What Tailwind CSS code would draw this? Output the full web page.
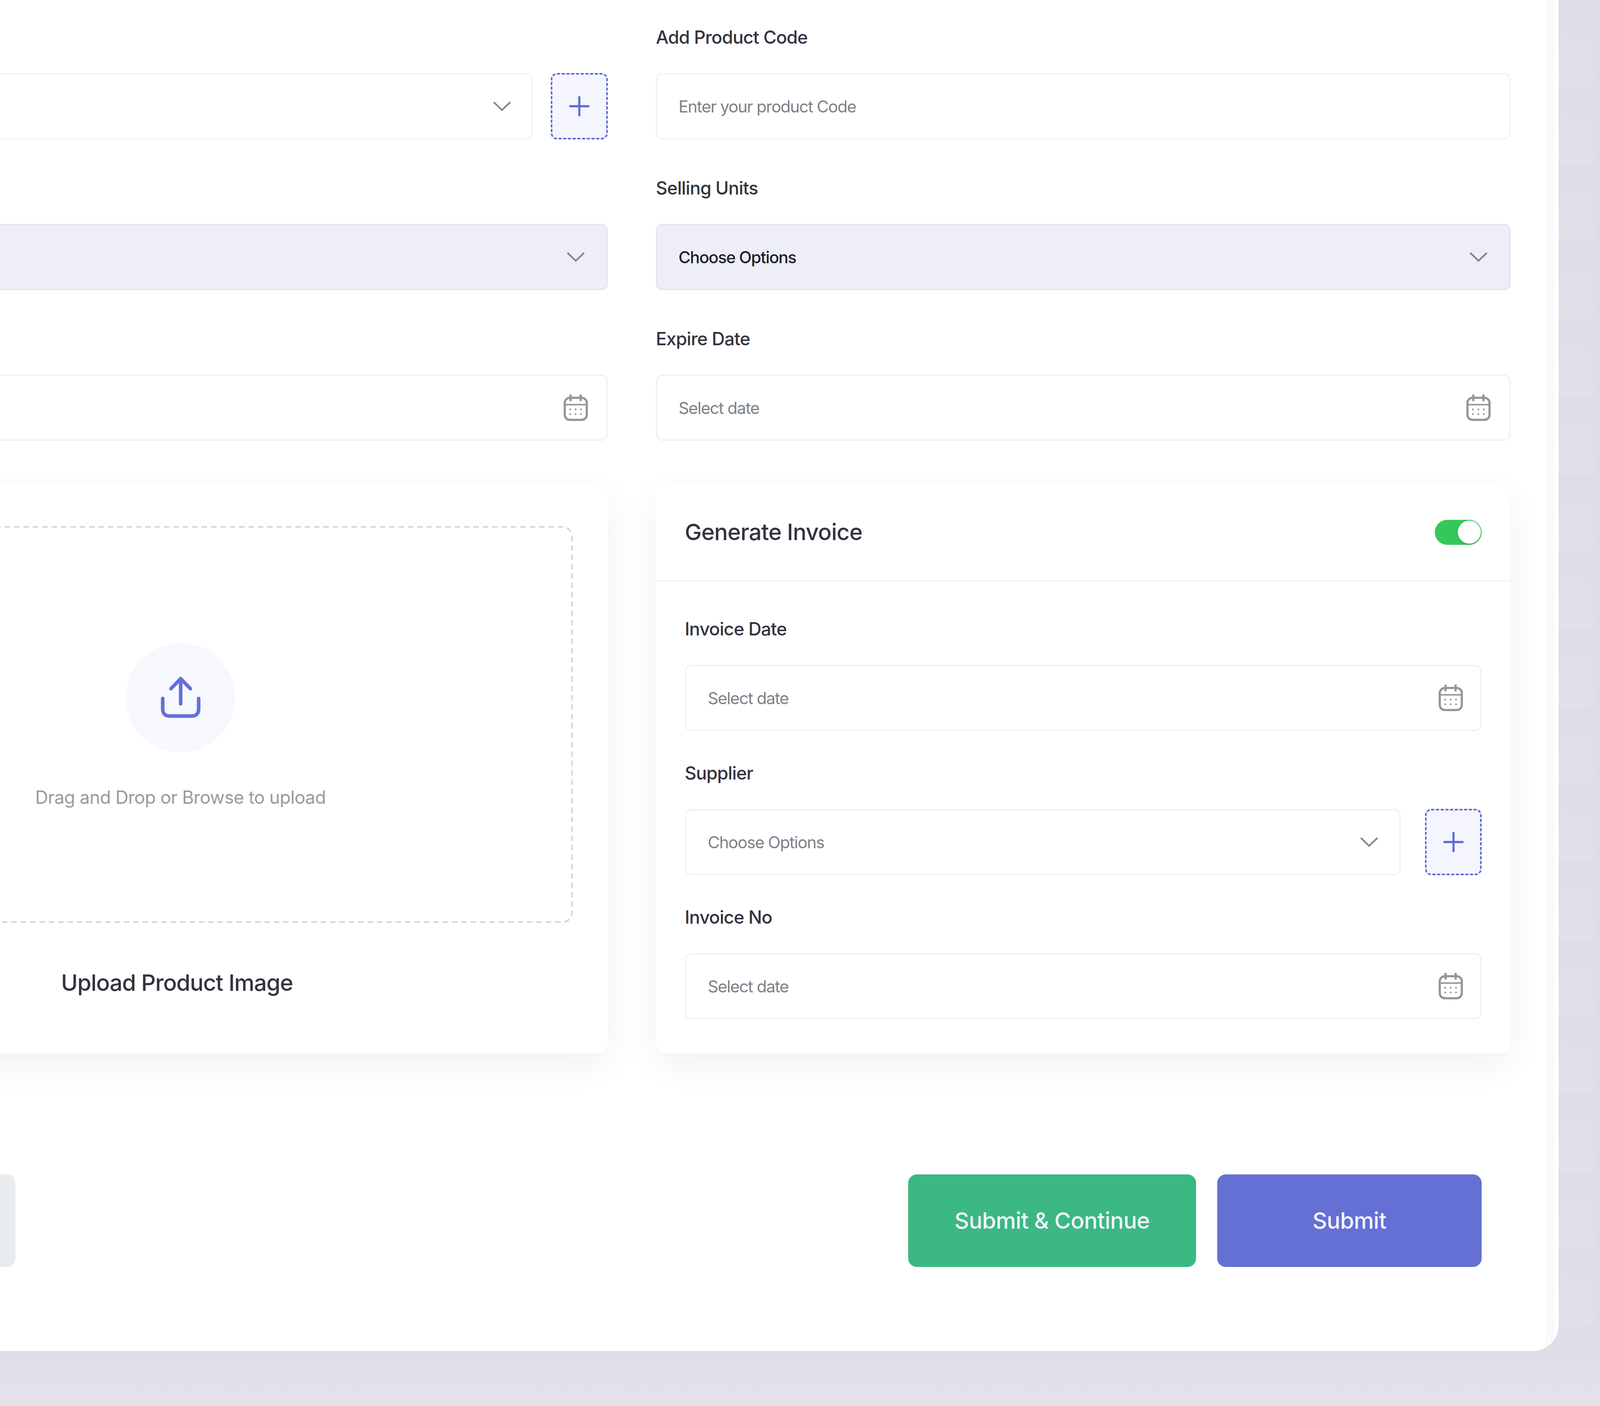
<!doctype html>
<html lang="en">
<head>
<meta charset="utf-8">
<title>Add Product</title>
<script src="https://cdn.jsdelivr.net/npm/@tailwindcss/browser@4"></script>
</head>
<body>
<div class="relative w-full h-[3600px] overflow-hidden bg-linear-to-b from-[#dfdde7] from-[96%] to-[#e4e3ea] font-['Inter',sans-serif]">
  <div class="absolute top-0 right-[14px] w-[200px] pt-[42px] flex flex-col gap-[18.4px]">
    <div class="h-[180px] rounded-br-[16px] bg-linear-to-b from-transparent to-white/10"></div>
    <div class="h-[180px] rounded-br-[16px] bg-linear-to-b from-transparent to-white/10"></div>
    <div class="h-[180px] rounded-br-[16px] bg-linear-to-b from-transparent to-white/10"></div>
    <div class="h-[180px] rounded-br-[16px] bg-linear-to-b from-transparent to-white/10"></div>
    <div class="h-[180px] rounded-br-[16px] bg-linear-to-b from-transparent to-white/10"></div>
    <div class="h-[180px] rounded-br-[16px] bg-linear-to-b from-transparent to-white/10"></div>
    <div class="h-[180px] rounded-br-[16px] bg-linear-to-b from-transparent to-white/10"></div>
    <div class="h-[180px] rounded-br-[16px] bg-linear-to-b from-transparent to-white/10"></div>
    <div class="h-[180px] rounded-br-[16px] bg-linear-to-b from-transparent to-white/10"></div>
    <div class="h-[180px] rounded-br-[16px] bg-linear-to-b from-transparent to-white/10"></div>
    <div class="h-[180px] rounded-br-[16px] bg-linear-to-b from-transparent to-white/10"></div>
    <div class="h-[180px] rounded-br-[16px] bg-linear-to-b from-transparent to-white/10"></div>
    <div class="h-[180px] rounded-br-[16px] bg-linear-to-b from-transparent to-white/10"></div>
    <div class="h-[180px] rounded-br-[16px] bg-linear-to-b from-transparent to-white/10"></div>
    <div class="h-[180px] rounded-br-[16px] bg-linear-to-b from-transparent to-white/10"></div>
    <div class="h-[180px] rounded-br-[16px] bg-linear-to-b from-transparent to-white/10"></div>
    <div class="h-[180px] rounded-br-[16px] bg-linear-to-b from-transparent to-white/10"></div>
  </div>

  <main class="relative w-[3990px] h-[3459px] bg-white rounded-br-[66px] overflow-hidden">
    <div class="absolute top-0 right-[10px] bottom-[12px] w-[24px] bg-[#f9fafd] rounded-br-[50px]"></div>

    <div class="relative ml-[-632px] w-[4499px] pt-[61px] grid grid-cols-2 gap-x-[123px]">
      <!-- Left column -->
      <div class="flex flex-col">
        <div class="h-[68px] mb-[58px]"></div>
        <div class="flex gap-[46px] h-[170px] mb-[90px]">
          <div class="flex-1 flex items-center justify-end pr-[52px] rounded-[16px] border-[4px] border-[#f3f3f5] bg-white">
            <svg width="46" height="26" viewBox="0 0 54 29" fill="none" stroke="#858589" stroke-width="5"><path d="M2 2 L27 26 L52 2"/></svg>
          </div>
          <button class="w-[146px] flex items-center justify-center rounded-[16px] border-[4px] border-dashed border-[#5b6ad6] bg-[#f4f5fe]">
            <svg width="52" height="52" viewBox="0 0 58 58" fill="none" stroke="#5c69d4" stroke-width="6" stroke-linecap="round"><path d="M29 3 V55 M3 29 H55"/></svg>
          </button>
        </div>
        <div class="h-[68px] mb-[58px]"></div>
        <div class="h-[170px] mb-[90px] flex items-center justify-end pr-[55px] rounded-[16px] border-[4px] border-[#e6e6ee] bg-[#edeef7]">
          <svg width="46" height="26" viewBox="0 0 54 29" fill="none" stroke="#858589" stroke-width="5"><path d="M2 2 L27 26 L52 2"/></svg>
        </div>
        <div class="h-[68px] mb-[58px]"></div>
        <div class="h-[170px] flex items-center justify-end pr-[47px] rounded-[16px] border-[4px] border-[#f3f3f5] bg-white">
          <svg width="62" height="68" viewBox="0 0 67 73" fill="none" stroke="#94949b" stroke-width="6"><rect x="3" y="9" width="61" height="61" rx="14"/><path d="M3 28 H64" stroke-width="4"/><path d="M19 1 V16 M47 1 V16" stroke-linecap="round"/><g fill="#94949b" stroke="none"><circle cx="18" cy="41" r="2.5"/><circle cx="33" cy="41" r="2.5"/><circle cx="48" cy="41" r="2.5"/><circle cx="18" cy="54" r="2.5"/><circle cx="33" cy="54" r="2.5"/><circle cx="48" cy="54" r="2.5"/></g></svg>
        </div>
      </div>

      <!-- Right column -->
      <div class="flex flex-col">
        <label class="h-[68px] mb-[58px] leading-[68px] text-[46px] tracking-[-0.02em] font-medium text-[#33333f]">Add Product Code</label>
        <div class="h-[170px] mb-[90px] flex items-center pl-[54px] rounded-[16px] border-[4px] border-[#f3f3f5] bg-white text-[42px] tracking-[-0.035em] text-[#808087]">Enter your product Code</div>
        <label class="h-[68px] mb-[58px] leading-[68px] text-[46px] tracking-[-0.02em] font-medium text-[#33333f]">Selling Units</label>
        <div class="h-[170px] mb-[90px] flex items-center justify-between pl-[54px] pr-[55px] rounded-[16px] border-[4px] border-[#e6e6ee] bg-[#edeef7] text-[42px] tracking-[-0.035em] font-medium text-[#1e1e2c]">
          <span>Choose Options</span>
          <svg width="46" height="26" viewBox="0 0 54 29" fill="none" stroke="#858589" stroke-width="5"><path d="M2 2 L27 26 L52 2"/></svg>
        </div>
        <label class="h-[68px] mb-[58px] leading-[68px] text-[46px] tracking-[-0.02em] font-medium text-[#33333f]">Expire Date</label>
        <div class="h-[170px] flex items-center justify-between pl-[54px] pr-[47px] rounded-[16px] border-[4px] border-[#f3f3f5] bg-white text-[42px] tracking-[-0.035em] text-[#808087]">
          <span>Select date</span>
          <svg width="62" height="68" viewBox="0 0 67 73" fill="none" stroke="#94949b" stroke-width="6"><rect x="3" y="9" width="61" height="61" rx="14"/><path d="M3 28 H64" stroke-width="4"/><path d="M19 1 V16 M47 1 V16" stroke-linecap="round"/><g fill="#94949b" stroke="none"><circle cx="18" cy="41" r="2.5"/><circle cx="33" cy="41" r="2.5"/><circle cx="48" cy="41" r="2.5"/><circle cx="18" cy="54" r="2.5"/><circle cx="33" cy="54" r="2.5"/><circle cx="48" cy="54" r="2.5"/></g></svg>
        </div>
      </div>

      <!-- Upload card -->
      <section class="mt-[111px] h-[1457px] rounded-[28px] bg-white shadow-[0_30px_90px_rgba(0,0,0,0.06)] pt-[107px] px-[90px] flex flex-col">
        <div class="relative h-[1016px] pt-[8px] flex flex-col items-center justify-center">
          <svg class="absolute inset-0" width="2008" height="1016" fill="none"><rect x="2" y="2" width="2004" height="1012" rx="24" stroke="#c9c9cc" stroke-width="3" stroke-dasharray="14 10"/></svg>
          <div class="w-[280px] h-[280px] my-[8px] rounded-full bg-[#f7f8fe] flex items-center justify-center">
            <svg width="103" height="107" viewBox="0 0 112 116" fill="none" stroke="#6471d6" stroke-width="10" stroke-linecap="round" stroke-linejoin="round"><path d="M29 34 L56 6 L83 34"/><path d="M56 6 V76"/><path d="M6 61 V90 Q6 110 26 110 H86 Q106 110 106 90 V61"/></svg>
          </div>
          <p class="mt-[67px] leading-[80px] text-[46px] tracking-[-0.015em] text-[#9a9a9e]">Drag and Drop or Browse to upload</p>
        </div>
        <h2 class="mt-[108px] pr-[18px] text-center leading-[90px] text-[58px] tracking-[-0.02em] font-medium text-[#33333f]">Upload Product Image</h2>
      </section>

      <!-- Invoice card -->
      <section class="mt-[111px] h-[1457px] rounded-[28px] bg-white shadow-[0_30px_90px_rgba(0,0,0,0.06)] flex flex-col">
        <header class="h-[249px] shrink-0 px-[74px] border-b-[4px] border-[#f3f3f5] flex items-center justify-between">
          <h2 class="text-[58px] tracking-[-0.016em] font-medium text-[#33333f]">Generate Invoice</h2>
          <div class="w-[120px] h-[64px] rounded-full bg-[#34c85a] flex items-center justify-end pr-[2px]">
            <div class="w-[59px] h-[59px] rounded-full bg-white shadow-[0_3px_6px_rgba(0,0,0,0.15)]"></div>
          </div>
        </header>
        <div class="px-[74px] pt-[87px] flex flex-col">
          <label class="h-[68px] mb-[58px] leading-[68px] text-[46px] tracking-[-0.02em] font-medium text-[#33333f]">Invoice Date</label>
          <div class="h-[170px] mb-[73px] flex items-center justify-between pl-[55px] pr-[44px] rounded-[16px] border-[4px] border-[#f3f3f5] bg-white text-[42px] tracking-[-0.035em] text-[#808087]">
            <span>Select date</span>
            <svg width="62" height="68" viewBox="0 0 67 73" fill="none" stroke="#94949b" stroke-width="6"><rect x="3" y="9" width="61" height="61" rx="14"/><path d="M3 28 H64" stroke-width="4"/><path d="M19 1 V16 M47 1 V16" stroke-linecap="round"/><g fill="#94949b" stroke="none"><circle cx="18" cy="41" r="2.5"/><circle cx="33" cy="41" r="2.5"/><circle cx="48" cy="41" r="2.5"/><circle cx="18" cy="54" r="2.5"/><circle cx="33" cy="54" r="2.5"/><circle cx="48" cy="54" r="2.5"/></g></svg>
          </div>
          <label class="h-[68px] mb-[58px] leading-[68px] text-[46px] tracking-[-0.02em] font-medium text-[#33333f]">Supplier</label>
          <div class="flex gap-[62px] h-[170px] mb-[73px]">
            <div class="flex-1 flex items-center justify-between pl-[55px] pr-[54px] rounded-[16px] border-[4px] border-[#f3f3f5] bg-white text-[42px] tracking-[-0.035em] text-[#808087]">
              <span>Choose Options</span>
              <svg width="46" height="26" viewBox="0 0 54 29" fill="none" stroke="#858589" stroke-width="5"><path d="M2 2 L27 26 L52 2"/></svg>
            </div>
            <button class="w-[145px] flex items-center justify-center rounded-[16px] border-[4px] border-dashed border-[#5b6ad6] bg-[#f4f5fe]">
              <svg width="52" height="52" viewBox="0 0 58 58" fill="none" stroke="#5c69d4" stroke-width="6" stroke-linecap="round"><path d="M29 3 V55 M3 29 H55"/></svg>
            </button>
          </div>
          <label class="h-[68px] mb-[58px] leading-[68px] text-[46px] tracking-[-0.02em] font-medium text-[#33333f]">Invoice No</label>
          <div class="h-[170px] flex items-center justify-between pl-[55px] pr-[44px] rounded-[16px] border-[4px] border-[#f3f3f5] bg-white text-[42px] tracking-[-0.035em] text-[#808087]">
            <span>Select date</span>
            <svg width="62" height="68" viewBox="0 0 67 73" fill="none" stroke="#94949b" stroke-width="6"><rect x="3" y="9" width="61" height="61" rx="14"/><path d="M3 28 H64" stroke-width="4"/><path d="M19 1 V16 M47 1 V16" stroke-linecap="round"/><g fill="#94949b" stroke="none"><circle cx="18" cy="41" r="2.5"/><circle cx="33" cy="41" r="2.5"/><circle cx="48" cy="41" r="2.5"/><circle cx="18" cy="54" r="2.5"/><circle cx="33" cy="54" r="2.5"/><circle cx="48" cy="54" r="2.5"/></g></svg>
          </div>
        </div>
      </section>
    </div>

    <!-- Actions -->
    <div class="relative mt-[310px] w-[3793px] h-[237px] flex">
      <button class="ml-[-260px] w-[300px] rounded-[22px] bg-[#e9ecef]"></button>
      <button class="ml-auto w-[737px] rounded-[22px] bg-[#3bb883] text-[58px] tracking-[-0.014em] font-medium text-[#f3f3fb]">Submit &amp; Continue</button>
      <button class="ml-[54px] w-[677px] rounded-[22px] bg-[#6470d4] text-[58px] tracking-[-0.014em] font-medium text-[#f3f3fb]">Submit</button>
    </div>
  </main>
</div>
</body>
</html>
